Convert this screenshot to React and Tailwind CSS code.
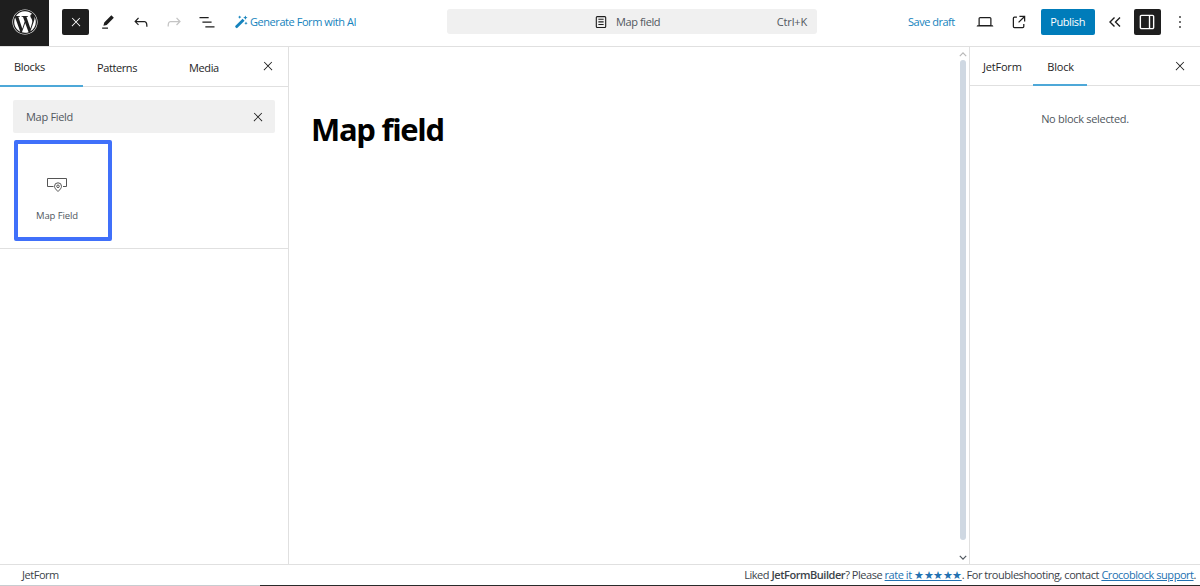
import { FaWordpress } from "react-icons/fa";

const font = { fontFamily: '"Open Sans", "Noto Sans", sans-serif' };

function Icon({ d, size = 24, className = "" }) {
  return (
    <svg viewBox="0 0 24 24" width={size} height={size} fill="currentColor" className={`shrink-0 ${className}`}>
      <path d={d} />
    </svg>
  );
}

const icons = {
  close: "M13 11.8l6.1-6.3-1-1-6.1 6.2-6.1-6.2-1 1 6.1 6.3-6.5 6.7 1 1 6.5-6.6 6.5 6.6 1-1z",
  pencil: "m19 7-3-3-8.5 8.5-1 4 4-1L19 7Zm-7 11.5H5V20h7v-1.5Z",
  undo: "M18.3 11.7c-.6-.6-1.4-.9-2.3-.9H6.7l2.9-3.3-1.1-1-4.5 5L8.5 16l1-1-2.7-2.7H16c.5 0 .9.2 1.3.5 1 1 1 3.4 1 4.5v.3h1.5v-.2c0-1.5 0-4.3-1.5-5.7z",
  redo: "M15.6 6.5l-1.1 1 2.9 3.3H8c-.9 0-1.7.3-2.3.9-1.4 1.5-1.4 4.2-1.4 5.6v.2h1.5v-.3c0-1.1 0-3.5 1-4.5.3-.3.7-.5 1.3-.5h9.2L14.5 15l1.1 1.1 4.6-4.6-4.6-5z",
  list: "M3 6h11v1.5H3V6Zm3.5 5.5h11V13h-11v-1.5ZM21 17H10v1.5h11V17Z",
  page: "M15.5 7.5h-7V9h7V7.5Zm-7 3.5h7v1.5h-7V11Zm7 3.5h-7V16h7v-1.5ZM17 4H7a2 2 0 0 0-2 2v12a2 2 0 0 0 2 2h10a2 2 0 0 0 2-2V6a2 2 0 0 0-2-2ZM7 5.5h10a.5.5 0 0 1 .5.5v12a.5.5 0 0 1-.5.5H7a.5.5 0 0 1-.5-.5V6a.5.5 0 0 1 .5-.5Z",
  laptop: "M20.5 16h-.7V8c0-1.1-.9-2-2-2H6.2c-1.1 0-2 .9-2 2v8h-.7c-.8 0-1.5.7-1.5 1.5h20c0-.8-.7-1.5-1.5-1.5zM5.7 8c0-.3.2-.5.5-.5h11.6c.3 0 .5.2.5.5v7.6H5.7V8z",
  external: "M19.5 4.5h-7V6h4.44l-5.97 5.97 1.06 1.06L18 7.06v4.44h1.5v-7Zm-13 1a2 2 0 0 0-2 2v10a2 2 0 0 0 2 2h10a2 2 0 0 0 2-2v-3H17v3a.5.5 0 0 1-.5.5h-10a.5.5 0 0 1-.5-.5v-10a.5.5 0 0 1 .5-.5h3V5.5h-3Z",
  panel: "M18 4H6c-1.1 0-2 .9-2 2v12c0 1.1.9 2 2 2h12c1.1 0 2-.9 2-2V6c0-1.1-.9-2-2-2zm-4 14.5H6c-.3 0-.5-.2-.5-.5V6c0-.3.2-.5.5-.5h8v13zm4.5-.5c0 .3-.2.5-.5.5h-2.5v-13H18c.3 0 .5.2.5.5v12z",
  more: "M13 19h-2v-2h2v2zm0-6h-2v-2h2v2zm0-6h-2V5h2v2z",
};

function Header() {
  return (
    <header className="flex h-[47px] shrink-0 items-start border-b border-[#e0e0e0] bg-white">
      <div className="flex h-[46px] w-[49px] shrink-0 items-center justify-center bg-[#1e1e1e] text-white">
        <FaWordpress size={26} className="-mt-[2px]" />
      </div>
      <div className="flex h-[44px] flex-1 items-center">
        <div className="flex w-[398px] shrink-0 items-center">
          <button className="ml-[13px] flex h-[26px] w-[27px] items-center justify-center rounded-[2px] bg-[#1e1e1e] text-white">
            <Icon d={icons.close} size={14} />
          </button>
          <div className="ml-[7px] flex w-[24px] justify-center text-[#1e1e1e]"><Icon d={icons.pencil} size={20} /></div>
          <div className="ml-[9px] flex w-[24px] justify-center text-[#1e1e1e]"><Icon d={icons.undo} size={20} /></div>
          <div className="ml-[9px] flex w-[24px] justify-center text-[#c4c4c4]"><Icon d={icons.redo} size={20} /></div>
          <div className="ml-[9px] flex w-[24px] justify-center text-[#1e1e1e]"><Icon d={icons.list} size={20} /></div>
          <div className="ml-[15px] flex items-center text-[11px] tracking-[-0.44px] text-[#1583bd]">
            <svg viewBox="0 0 16 16" width="14" height="14" fill="currentColor" className="mr-[2px]">
              <path d="M9.800 4.200l2.300 2.300-8.100 8.100a1.200 1.200 0 0 1-1.700 0l-.6-.6a1.200 1.200 0 0 1 0-1.700zM13 .5l.8 1.700 1.700.8-1.700.8-.8 1.700-.8-1.700-1.700-.8 1.700-.8zM6.500.5l.6 1.300 1.300.6-1.300.6-.6 1.300-.6-1.300-1.300-.6 1.300-.6zM13.700 7.500l.6 1.300 1.300.6-1.300.6-.6 1.300-.6-1.300-1.300-.6 1.300-.6z" />
            </svg>
            Generate Form with AI
          </div>
        </div>

        <div className="mb-px flex h-[25px] w-[370px] shrink-0 items-center rounded-[3px] bg-[#f0f0f0] pl-[145px] pr-[10px] text-[11px] tracking-[-0.4px] text-[#50575e]">
          <Icon d={icons.page} size={18} className="text-[#1e1e1e]" />
          <span className="ml-[6px] pt-px">Map field</span>
          <span className="ml-auto pt-px tracking-[-0.15px]">Ctrl+K</span>
        </div>

        <div className="flex flex-1 items-center">
          <span className="ml-[91px] text-[11px] tracking-[-0.5px] text-[#1583bd]">Save draft</span>
          <div className="ml-[20px] text-[#1e1e1e]"><Icon d={icons.laptop} size={20} /></div>
          <div className="ml-[14px] text-[#1e1e1e]"><Icon d={icons.external} size={20} /></div>
          <button className="ml-[12px] h-[26px] w-[54px] rounded-[2px] bg-[#007cba] text-[11px] tracking-[-0.4px] text-white">Publish</button>
          <svg viewBox="0 0 14 14" width="14" height="14" fill="none" stroke="#1e1e1e" strokeWidth="1.4" className="ml-[13px]">
            <path d="M6.500 2.500 2 7l4.500 4.500M12 2.500 7.500 7l4.500 4.500" />
          </svg>
          <button className="ml-[12px] flex h-[26px] w-[27px] items-center justify-center rounded-[2px] bg-[#1e1e1e] text-white">
            <Icon d={icons.panel} size={22} />
          </button>
          <div className="ml-[9px] text-[#1e1e1e]"><Icon d={icons.more} size={20} /></div>
        </div>
      </div>
    </header>
  );
}

function Inserter() {
  return (
    <aside className="flex w-[289px] shrink-0 flex-col border-r border-[#e0e0e0] bg-white">
      <div className="flex h-[40px] shrink-0 border-b border-[#e0e0e0] text-[11px] text-[#1e1e1e]">
        <div className="-mb-px flex w-[83px] items-center border-b-2 border-[#4ea8d8] pl-[14px] pt-[3px] tracking-[-0.3px]">Blocks</div>
        <div className="ml-[14px] flex items-center pt-[3px] tracking-[-0.4px]">Patterns</div>
        <div className="ml-[52px] flex items-center pt-[3px] tracking-[-0.4px]">Media</div>
        <div className="ml-auto mr-[13px] flex items-center pb-[1px]"><Icon d={icons.close} size={14} /></div>
      </div>
      <div className="mx-[13px] mt-[13px] flex h-[33px] w-[262px] items-center justify-between rounded-[2px] bg-[#f0f0f0] pl-[13px] pr-[10px] text-[11px] tracking-[-0.3px] text-[#50575e]">
        <span className="pt-[2px]">Map Field</span>
        <Icon d={icons.close} size={14} className="text-[#1e1e1e]" />
      </div>
      <div className="border-b border-[#e0e0e0] pb-[7px] pl-[14px] pt-[7px]">
        <div className="flex h-[101px] w-[98px] flex-col items-center rounded-[2px] border-4 border-[#4070fa] bg-white pr-[12px] pt-[33px] text-[#50575e]">
          <svg viewBox="0 0 22 16" width="22" height="16" fill="none" stroke="#555" strokeWidth="1">
            <path d="M7.500 9.500H1.500V1.500H20.500V9.500H17" />
            <path d="M12 14.500c-2-2-3.500-3.400-3.500-5.200a3.500 3.500 0 0 1 7 0c0 1.800-1.500 3.200-3.500 5.200Z" />
            <circle cx="12" cy="9.300" r="1.300" />
          </svg>
          <span className="mt-[16px] whitespace-nowrap text-[9.500px] tracking-[-0.1px]">Map Field</span>
        </div>
      </div>
    </aside>
  );
}

function Canvas() {
  return (
    <main className="flex min-w-0 flex-1 bg-white">
      <div className="flex-1 pl-[22px] pt-[61px]">
        <h1 className="text-[31px] font-bold leading-[42px] tracking-[-1.3px] text-black">Map field</h1>
      </div>
      <div className="flex w-[12px] shrink-0 flex-col items-center text-[#50575e]">
        <svg viewBox="0 0 10 6" width="8" height="5" fill="none" stroke="#b8b8b8" strokeWidth="1.500" className="mt-[5px]"><path d="M1 5l4-4 4 4" /></svg>
        <div className="mt-[3px] h-[480px] w-[6px] rounded-full bg-[#cfd8e2]" />
        <svg viewBox="0 0 10 6" width="8" height="5" fill="none" stroke="#50575e" strokeWidth="1.500" className="mb-[4px] mt-auto"><path d="M1 1l4 4 4-4" /></svg>
      </div>
    </main>
  );
}

function Sidebar() {
  return (
    <aside className="w-[231px] shrink-0 border-l border-[#e0e0e0] bg-white">
      <div className="flex h-[39px] border-b border-[#e0e0e0] text-[11px] text-[#1e1e1e]">
        <div className="flex items-center pl-[13px] pt-[3px] tracking-[-0.2px]">JetForm</div>
        <div className="-mb-px ml-[11px] flex w-[54px] items-center justify-center border-b-2 border-[#4ea8d8] pl-[2px] pt-[3px] tracking-[-0.2px]">Block</div>
        <div className="ml-auto mr-[13px] flex items-center"><Icon d={icons.close} size={14} /></div>
      </div>
      <p className="mt-[25px] text-center text-[11px] tracking-[-0.3px] text-[#50575e]">No block selected.</p>
    </aside>
  );
}

function Footer() {
  return (
    <footer className="flex h-[22px] shrink-0 flex-col border-t border-[#e0e0e0] bg-white text-[11px] tracking-[-0.46px] text-[#3c434a]">
      <div className="flex flex-1 items-center justify-between pl-[22px] pr-[4px]">
        <span>JetForm</span>
        <span>
          Liked <strong className="font-semibold">JetFormBuilder</strong>? Please{" "}
          <a className="text-[#2271b1] underline">rate it ★★★★★</a>. For troubleshooting, contact{" "}
          <a className="text-[#2271b1] underline">Crocoblock support</a>.
        </span>
      </div>
      <div className="flex h-px shrink-0">
        <div className="w-[260px] bg-[#c8ccd0]" />
        <div className="flex-1 bg-[#2a2a2a]" />
      </div>
    </footer>
  );
}

export default function App() {
  return (
    <div className="flex h-[586px] w-[1200px] flex-col overflow-hidden bg-white" style={font}>
      <Header />
      <div className="flex min-h-0 flex-1">
        <Inserter />
        <Canvas />
        <Sidebar />
      </div>
      <Footer />
    </div>
  );
}
